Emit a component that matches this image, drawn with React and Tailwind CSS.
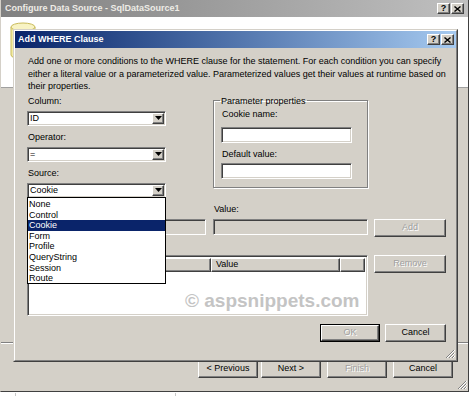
import React from "react";

const ui = "font-['Liberation_Sans',Arial,sans-serif]";

function Raised({ children, className = "", disabled, def }) {
  const btn = (
    <div
      className={`flex items-center justify-center bg-[#d4d0c8] border border-t-white border-l-white border-r-[#404040] border-b-[#404040] shadow-[inset_-1px_-1px_0_#808080] ${
        disabled ? "text-[#a0a0a0] [text-shadow:1px_1px_0_#ffffff]" : "text-black"
      } ${def ? "w-full h-full" : className}`}
    >
      {children}
    </div>
  );
  if (def) return <div className={`border border-black ${className}`}>{btn}</div>;
  return btn;
}

function Sunken({ children, className = "", disabled }) {
  return (
    <div
      className={`border border-t-[#808080] border-l-[#808080] border-b-white border-r-white shadow-[inset_1px_1px_0_#404040,inset_-1px_-1px_0_#d4d0c8] ${
        disabled ? "bg-[#d4d0c8]" : "bg-white"
      } ${className}`}
    >
      {children}
    </div>
  );
}

function Arrow() {
  return (
    <svg width="7" height="4" viewBox="0 0 7 4">
      <polygon points="0,0 7,0 3.5,4" fill="#000" />
    </svg>
  );
}

function Combo({ value, className = "" }) {
  return (
    <Sunken className={`h-[15px] flex items-center pl-[2px] pr-[1px] ${className}`}>
      <span className="flex-1 leading-[12px]">{value}</span>
      <Raised className="w-[12px] h-[11px]">
        <Arrow />
      </Raised>
    </Sunken>
  );
}

function CaptionButtons() {
  return (
    <div className="ml-auto flex gap-[1px]">
      <Raised className="w-[13px] h-[11px] font-bold text-[9px] leading-none">?</Raised>
      <Raised className="w-[13px] h-[11px]">
        <svg width="7" height="6" viewBox="0 0 7 6">
          <path d="M0.5 0.5 L6.5 5.5 M6.5 0.5 L0.5 5.5" stroke="#000" strokeWidth="1.4" />
        </svg>
      </Raised>
    </div>
  );
}

function Grip() {
  return (
    <svg width="10" height="10" viewBox="0 0 10 10">
      <path d="M9 1 L1 9 M9 4 L4 9 M9 7 L7 9" stroke="#808080" strokeWidth="1" />
      <path d="M10 1 L2 9 M10 4 L5 9 M10 7 L8 9" stroke="#ffffff" strokeWidth="1" />
    </svg>
  );
}

function Label({ children, className = "" }) {
  return <div className={`h-[12px] leading-[12px] ml-[1px] whitespace-nowrap ${className}`}>{children}</div>;
}

const sources = ["None", "Control", "Cookie", "Form", "Profile", "QueryString", "Session", "Route"];

export default function App() {
  return (
    <div className={`relative w-[474px] h-[396px] bg-white overflow-hidden text-[9px] text-black ${ui}`}>
      {/* wizard window */}
      <div className="relative w-[469px] h-[392px] flex flex-col bg-[#d4d0c8] border-l border-l-[#d4d0c8] border-r border-r-[#404040] border-b border-b-[#404040]">
        <div className="h-[17px] shrink-0 flex items-center pl-[4px] pr-[4px] bg-linear-to-r from-[#808080] to-[#c0c0c0]">
          <span className="font-bold text-[#eeece6]">Configure Data Source - SqlDataSource1</span>
          <CaptionButtons />
        </div>
        <div className="h-[71px] shrink-0 bg-white border-b border-b-[#a0a0a0] pl-[9px] pt-[5px]">
          <svg width="26" height="38" viewBox="0 0 26 38">
            <path d="M1 5 L1 33 A12 4 0 0 0 25 33 L25 5" fill="#f3eca6" stroke="#c9bb5a" />
            <ellipse cx="13" cy="5" rx="12" ry="4" fill="#f8f3c4" stroke="#c9bb5a" />
          </svg>
        </div>
        <div className="flex-1 flex flex-col">
          <div className="h-[254px]" />
          <div className="h-[2px] border-t border-t-[#808080] border-b border-b-white" />
          <div className="flex justify-end pr-[15px] mt-[15px]">
            <Raised className="w-[60px] h-[19px]">&lt; Previous</Raised>
            <Raised className="w-[60px] h-[19px] ml-[3px]">Next &gt;</Raised>
            <Raised className="w-[60px] h-[19px] ml-[6px]" disabled>
              Finish
            </Raised>
            <Raised className="w-[60px] h-[19px] ml-[6px]">Cancel</Raised>
          </div>
        </div>
        <div className="absolute right-[1px] bottom-[1px]">
          <Grip />
        </div>
      </div>
      <div className="absolute left-[15px] top-[393px] w-[161px] h-[3px] border-l border-r border-[#c8c8c8]" />

      {/* Add WHERE Clause dialog */}
      <div className="absolute left-[13px] top-[29px] w-[445px] h-[333px] bg-[#d4d0c8] border border-t-[#d4d0c8] border-l-[#d4d0c8] border-r-[#404040] border-b-[#404040]">
        <div className="relative h-full flex flex-col border border-t-white border-l-white border-r-[#808080] border-b-[#808080]">
          <div className="h-[17px] shrink-0 flex items-center pl-[3px] pr-[2px] bg-linear-to-r from-[#0a246a] to-[#a6caf0]">
            <span className="font-bold text-white">Add WHERE Clause</span>
            <CaptionButtons />
          </div>

          <div className="pl-[12px] pr-[10px]">
            <p className="mt-[7px] ml-[1px] leading-[12.5px] whitespace-nowrap">
              Add one or more conditions to the WHERE clause for the statement. For each condition you can specify
              <br />
              either a literal value or a parameterized value. Parameterized values get their values at runtime based on
              <br />
              their properties.
            </p>

            <div className="flex mt-[2px]">
              <div className="w-[139px]">
                <Label>Column:</Label>
                <Combo value="ID" className="mt-[4px]" />
                <Label className="mt-[5px]">Operator:</Label>
                <Combo value="=" className="mt-[4px]" />
                <Label className="mt-[5px]">Source:</Label>
                <Combo value="Cookie" className="mt-[4px]" />
              </div>
              <fieldset className="ml-[47px] w-[155px] h-[93px] border border-[#808080] shadow-[1px_1px_0_#ffffff,inset_1px_1px_0_#ffffff] pl-[7px]">
                <legend className="ml-[-1px] px-[1px] h-[12px] leading-[12px]">Parameter properties</legend>
                <Label className="mt-[1px]">Cookie name:</Label>
                <Sunken className="mt-[7px] w-[131px] h-[16px]" />
                <Label className="mt-[5px]">Default value:</Label>
                <Sunken className="mt-[3px] w-[131px] h-[16px]" />
              </fieldset>
            </div>

            <div className="flex mt-[5px]">
              {/* label of this box is covered by the open drop-down */}
              <div className="w-[180px] pt-[16px]">
                <Sunken disabled className="w-[179px] h-[16px]" />
              </div>
              <div className="w-[155px] ml-[6px]">
                <Label>Value:</Label>
                <Sunken disabled className="mt-[4px] w-[155px] h-[16px]" />
              </div>
              <Raised disabled className="ml-[6px] mt-[16px] w-[72px] h-[18px]">
                Add
              </Raised>
            </div>

            <div className="flex mt-[2px]">
              <div className="w-[341px] pt-[16px]">
                <Sunken className="relative h-[61px] p-[2px]">
                  <div className="flex h-[14px]">
                    <Raised className="w-[181px] h-[14px]" />
                    <Raised className="w-[129px] h-[14px] !justify-start pl-[4px]">Value</Raised>
                    <Raised className="flex-1 h-[14px]" />
                  </div>
                </Sunken>
              </div>
              <Raised disabled className="ml-[6px] mt-[16px] w-[72px] h-[18px]">
                Remove
              </Raised>
            </div>

            <div className="flex justify-end mt-[8px]">
              <Raised def disabled className="w-[60px] h-[18px]">
                OK
              </Raised>
              <Raised className="ml-[5px] w-[61px] h-[18px]">Cancel</Raised>
            </div>
          </div>

          <div className="absolute right-[1px] bottom-[1px]">
            <Grip />
          </div>
        </div>
      </div>

      {/* watermark */}
      <div className="absolute left-[185px] top-[290px] text-[19px] font-bold text-[#c4c4c4] leading-[22px] whitespace-nowrap">
        © aspsnippets.com
      </div>

      {/* open Source drop-down */}
      <div className="absolute left-[27px] top-[197px] w-[139px] h-[87px] bg-white border border-black pt-[1px]">
        {sources.map((s) => (
          <div
            key={s}
            className={`h-[10.6px] leading-[10.6px] pl-[1px] ${s === "Cookie" ? "bg-[#0a246a] text-white" : ""}`}
          >
            {s}
          </div>
        ))}
      </div>
    </div>
  );
}
